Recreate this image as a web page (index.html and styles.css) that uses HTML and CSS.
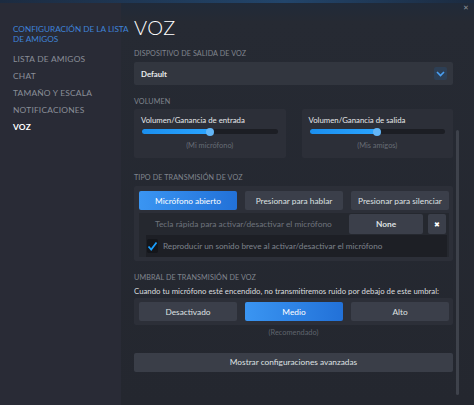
FILE: index.html
```html
<!DOCTYPE html>
<html lang="es">
<head>
  <meta charset="UTF-8" />
  <title>Voz - Configuración de la lista de amigos</title>
  <link rel="stylesheet" href="styles.css">
</head>
<body>
  <div class="window">
    <div class="topbar"></div>
    <span class="close">&#x2715;</span>

    <aside class="sidebar">
      <div class="sidebar-title">CONFIGURACIÓN DE LA LISTA<br>DE AMIGOS</div>
      <ul>
        <li>LISTA DE AMIGOS</li>
        <li>CHAT</li>
        <li>TAMAÑO Y ESCALA</li>
        <li>NOTIFICACIONES</li>
        <li class="active">VOZ</li>
      </ul>
    </aside>

    <main class="content">
      <h1>VOZ</h1>

      <div class="section-label">DISPOSITIVO DE SALIDA DE VOZ</div>
      <div class="dropdown">
        <span>Default</span>
        <span class="chevron">
          <svg width="9" height="6" viewBox="0 0 9 6"><path d="M1 1 L4.5 4.5 L8 1" fill="none" stroke="#4a9ff2" stroke-width="1.6"/></svg>
        </span>
      </div>

      <div class="section-label">VOLUMEN</div>
      <div class="volume-row">
        <div class="volume-card">
          <div class="volume-title">Volumen/Ganancia de entrada</div>
          <div class="slider"><div class="fill" style="width: 50%"></div></div>
          <div class="volume-sub">(Mi micrófono)</div>
        </div>
        <div class="volume-card">
          <div class="volume-title">Volumen/Ganancia de salida</div>
          <div class="slider"><div class="fill" style="width: 50%"></div></div>
          <div class="volume-sub">(Mis amigos)</div>
        </div>
      </div>

      <div class="section-label">TIPO DE TRANSMISIÓN DE VOZ</div>
      <div class="group">
        <div class="btn-row">
          <button class="btn active">Micrófono abierto</button>
          <button class="btn">Presionar para hablar</button>
          <button class="btn">Presionar para silenciar</button>
        </div>
        <div class="group-inner">
          <div class="hotkey-row">
            <span class="hotkey-label">Tecla rápida para activar/desactivar el micrófono</span>
            <button class="btn none-btn">None</button>
            <button class="btn clear-btn">&#x2716;</button>
          </div>
          <div class="check-row">
            <span class="checkbox">
              <svg width="11" height="11" viewBox="0 0 11 11"><path d="M1.5 5.5 L4.2 8.5 L9.5 1.5" fill="none" stroke="#1a9fff" stroke-width="1.8"/></svg>
            </span>
            <span>Reproducir un sonido breve al activar/desactivar el micrófono</span>
          </div>
        </div>
      </div>

      <div class="section-label umbral">UMBRAL DE TRANSMISIÓN DE VOZ</div>
      <div class="umbral-text">Cuando tu micrófono esté encendido, no transmitiremos ruido por debajo de este umbral:</div>
      <div class="group threshold">
        <div class="btn-row">
          <button class="btn">Desactivado</button>
          <button class="btn active">Medio</button>
          <button class="btn">Alto</button>
        </div>
      </div>
      <div class="recommended">(Recomendado)</div>

      <button class="btn advanced">Mostrar configuraciones avanzadas</button>
    </main>

    <div class="scrollbar"></div>
  </div>
</body>
</html>
```

FILE: styles.css
```css
* {
  margin: 0;
  padding: 0;
  box-sizing: border-box;
  font-family: 'Lato', 'Noto Sans', sans-serif;
}

body {
  width: 474px;
  height: 405px;
  overflow: hidden;
  background: #23262e;
}

.window {
  position: relative;
  display: flex;
  height: 405px;
  background: linear-gradient(180deg, #1f2a3a 0px, #262a33 22px, #24272f 100%);
}

.topbar {
  position: absolute;
  top: 0;
  left: 0;
  right: 0;
  height: 3px;
  background: linear-gradient(90deg, #1c2b40, #22456b 60%, #1c2b40);
}

.close {
  position: absolute;
  top: 3px;
  right: 5px;
  font-size: 7px;
  color: #8d939b;
}

.sidebar {
  width: 121px;
  flex-shrink: 0;
  background: #292b36;
  padding: 24px 0 0 13px;
}

.sidebar-title {
  color: #3f83d8;
  font-size: 8.2px;
  line-height: 10px;
  margin-bottom: 10px;
  white-space: nowrap;
}

.sidebar ul {
  list-style: none;
}

.sidebar li {
  color: #8a8e98;
  font-size: 8.4px;
  line-height: 10px;
  margin-bottom: 7px;
  letter-spacing: 0.2px;
}

.sidebar li.active {
  color: #fff;
  font-weight: bold;
}

.content {
  flex: 1;
  padding: 15px 21px 0 13px;
}

h1 {
  color: #fff;
  font-size: 20px;
  font-weight: 300;
  line-height: 24px;
  letter-spacing: 0.5px;
  margin-bottom: 10px;
}

.section-label {
  color: #80858e;
  font-size: 7.2px;
  line-height: 9px;
  margin-bottom: 4px;
  letter-spacing: 0.1px;
}

.dropdown {
  height: 23px;
  background: #32363f;
  border-radius: 2px;
  display: flex;
  align-items: center;
  justify-content: space-between;
  padding: 0 6px 0 7px;
  color: #e8eaec;
  font-size: 7.8px;
  font-weight: bold;
  margin-bottom: 12px;
}

.chevron {
  width: 13px;
  height: 13px;
  background: #2d3f55;
  border-radius: 2px;
  display: flex;
  align-items: center;
  justify-content: center;
}

.volume-row {
  display: flex;
  gap: 16px;
  margin-top: -1px;
  margin-bottom: 15px;
}

.volume-card {
  flex: 1;
  height: 49px;
  background: #2c2f38;
  border-radius: 2px;
  padding: 6px 7px 0 7px;
}

.volume-title {
  color: #e6e8ea;
  font-size: 7.8px;
  line-height: 10px;
  margin-bottom: 4px;
}

.slider {
  height: 5px;
  margin: 0 1px 0 1px;
  border-radius: 3px;
  background: #1c1e24;
  position: relative;
}

.slider .fill {
  height: 5px;
  border-radius: 3px;
  background: linear-gradient(90deg, #1b8fee, #2aa4ff);
  position: relative;
}

.slider .fill::after {
  content: '';
  position: absolute;
  right: -4px;
  top: -1.5px;
  width: 8px;
  height: 8px;
  border-radius: 50%;
  background: #63b6f7;
}

.volume-sub {
  text-align: center;
  color: #676c75;
  font-size: 7.4px;
  line-height: 10px;
  margin-top: 7px;
}

.group {
  background: #2c2f38;
  border-radius: 2px;
  padding: 5px 4px 4px 5px;
}

.btn-row {
  display: flex;
  gap: 8px;
}

.btn {
  border: none;
  border-radius: 2px;
  background: #3b3f4a;
  color: #dfe1e3;
  font-size: 8.3px;
  font-family: 'Lato', 'Noto Sans', sans-serif;
  height: 19px;
}

.btn-row .btn {
  flex: 1;
}

.btn.active {
  background: linear-gradient(90deg, #3a95f2, #2271d8);
  color: #fff;
}

.group-inner {
  margin-top: 3px;
  background: #25282f;
  padding: 0 2px 0 0;
}

.hotkey-row {
  display: flex;
  align-items: center;
  height: 22px;
  gap: 5px;
  padding-right: 1px;
}

.hotkey-label {
  flex: 1;
  color: #6f747d;
  font-size: 8.4px;
  padding-left: 16px;
  white-space: nowrap;
}

.none-btn {
  width: 74px;
  flex-shrink: 0;
  height: 20px;
  font-weight: bold;
}

.clear-btn {
  width: 18px;
  flex-shrink: 0;
  height: 20px;
  font-size: 7px;
  color: #fff;
}

.check-row {
  display: flex;
  align-items: center;
  gap: 5px;
  height: 22px;
  margin-left: 7px;
  background: #1d1f25;
  color: #7e838c;
  font-size: 8.2px;
  white-space: nowrap;
}

.checkbox {
  width: 11px;
  height: 14px;
  background: #14161b;
  border-radius: 2px;
  display: flex;
  align-items: center;
  justify-content: center;
  margin-left: 1px;
}

.umbral {
  margin-top: 12px;
}

.umbral-text {
  color: #dadcdf;
  font-size: 7.8px;
  line-height: 10px;
  margin-bottom: 2px;
  white-space: nowrap;
}

.threshold {
  padding: 4px 4px 4px 5px;
}

.recommended {
  text-align: center;
  color: #5f646d;
  font-size: 7.4px;
  line-height: 10px;
  margin-top: 3px;
  margin-bottom: 11px;
}

.advanced {
  width: 100%;
  height: 19px;
  background: #3a3e48;
  font-size: 8.3px;
}

.scrollbar {
  position: absolute;
  left: 456px;
  top: 130px;
  width: 3px;
  height: 265px;
  border-radius: 2px;
  background: #3e424b;
}
```
